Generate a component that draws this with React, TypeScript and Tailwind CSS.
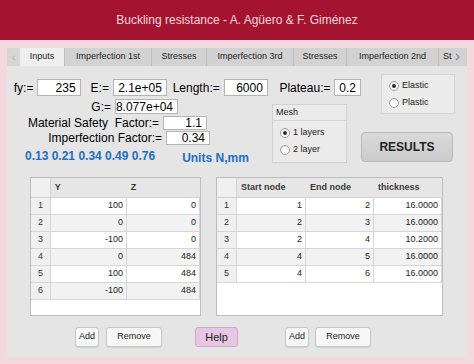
const tabs = [
  { label: 'Inputs', w: 'w-[45px]', active: true },
  { label: 'Imperfection 1st', w: 'w-[87px]' },
  { label: 'Stresses', w: 'w-[55px]' },
  { label: 'Imperfection 3rd', w: 'w-[87px]' },
  { label: 'Stresses', w: 'w-[53px]' },
  { label: 'Imperfection 2nd', w: 'w-[92px]' },
];

const nodes = [
  ['100', '0'],
  ['0', '0'],
  ['-100', '0'],
  ['0', '484'],
  ['100', '484'],
  ['-100', '484'],
];

const elements = [
  ['1', '2', '16.0000'],
  ['2', '3', '16.0000'],
  ['2', '4', '10.2000'],
  ['4', '5', '16.0000'],
  ['4', '6', '16.0000'],
];

function Radio({ checked, label }: { checked?: boolean; label: string }) {
  return (
    <div className="flex items-center gap-[3px] text-[9px] leading-[11px] text-[#222]">
      <span className="w-[10px] h-[10px] rounded-full border border-[#a0a0a0] bg-white flex items-center justify-center shadow-[inset_0_1px_1px_rgba(0,0,0,0.12)]">
        {checked && <span className="w-[4px] h-[4px] rounded-full bg-[#2a2a2a]" />}
      </span>
      <span>{label}</span>
    </div>
  );
}

function Field({ value, w, h = 'h-[17px]' }: { value: string; w: string; h?: string }) {
  return (
    <div
      className={`${w} ${h} ml-[4px] bg-white border border-[#b4b4b4] flex items-center justify-end pr-[4px] text-[12px] leading-[12px] text-black`}
    >
      {value}
    </div>
  );
}

function Label({ text, w }: { text: string; w: string }) {
  return (
    <span className={`${w} text-right text-[12px] leading-[14px] text-black whitespace-pre`}>{text}</span>
  );
}

function DataTable({
  headers,
  widths,
  rows,
  width,
}: {
  headers: string[];
  widths: string[];
  rows: string[][];
  width: string;
}) {
  return (
    <div className={`${width} h-[139px] bg-white border border-[#bdbdbd] flex flex-col text-[9px]`}>
      <div className="flex h-[20px] bg-[#e6e6e6] border-b border-[#d2d2d2]">
        <div className="w-[20px] bg-[#f0f0f0] border-r border-[#d2d2d2]" />
        {headers.map((h, i) => (
          <div
            key={i}
            className={`${widths[i]} flex items-center pl-[4px] font-bold text-[#3a3a3a] border-r border-[#e6e6e6]`}
          >
            {h}
          </div>
        ))}
      </div>
      {rows.map((r, ri) => (
        <div
          key={ri}
          className={`flex h-[17px] border-b border-[#d6d6d6] ${ri % 2 ? 'bg-[#f2f2f2]' : 'bg-white'}`}
        >
          <div className="w-[20px] bg-[#f0f0f0] border-r border-[#d6d6d6] flex items-center pl-[7px] text-[#333]">
            {ri + 1}
          </div>
          {r.map((c, ci) => (
            <div
              key={ci}
              className={`${widths[ci]} flex items-center justify-end pr-[3px] text-[#222] border-r border-[#d6d6d6]`}
            >
              {c}
            </div>
          ))}
        </div>
      ))}
    </div>
  );
}

function Btn({ label, w }: { label: string; w: string }) {
  return (
    <div
      className={`${w} h-[20px] rounded-[3px] bg-[#f7f7f7] border border-[#c6c6c6] shadow-[0_1px_1px_rgba(0,0,0,0.08)] flex items-center justify-center text-[9px] text-[#222]`}
    >
      {label}
    </div>
  );
}

export default function App() {
  return (
    <div
      className="w-[474px] h-[364px] bg-[#f4d9e0] overflow-hidden flex flex-col"
      style={{ fontFamily: '"Liberation Sans", Arial, sans-serif' }}
    >
      <div className="h-[40px] bg-[#a41430] flex items-center justify-center text-[12px] text-[#f6d6dd]">
        Buckling resistance - A. Agüero &amp; F. Giménez
      </div>

      <div className="ml-[7px] mt-[8px] w-[460px] flex flex-col">
        {/* tab strip */}
        <div className="flex h-[18px] text-[9px] text-[#222] whitespace-nowrap">
          <div className="w-[13px] shrink-0 bg-[#d6d6d6] flex items-center justify-center text-[#b0b0b0] text-[11px]">
            ‹
          </div>
          {tabs.map((t, i) => (
            <div
              key={i}
              className={`${t.w} shrink-0 flex items-center justify-center border-r border-[#bdbdbd] ${
                t.active ? 'bg-[#efefef]' : 'bg-[#d2d2d2]'
              }`}
            >
              {t.label}
            </div>
          ))}
          <div className="w-[28px] shrink-0 bg-[#d2d2d2] flex items-center pl-[4px] gap-[3px] overflow-hidden">
            <span>St</span>
            <svg width="5" height="8" viewBox="0 0 5 8" className="shrink-0">
              <path d="M1 1l3 3-3 3" fill="none" stroke="#8c8c8c" strokeWidth="1.2" />
            </svg>
          </div>
        </div>

        {/* panel */}
        <div className="h-[291px] bg-[#e5e5e5] flex flex-col">
          <div className="flex h-[111px]">
            <div className="w-[354px] flex flex-col">
              <div className="flex items-center mt-[13px] h-[17px]">
                <Label text="fy:=" w="w-[27px]" />
                <Field value="235" w="w-[44px]" />
                <Label text="E:=" w="w-[29px]" />
                <Field value="2.1e+05" w="w-[55px]" />
                <Label text="Length:=" w="w-[54px]" />
                <Field value="6000" w="w-[45px]" />
                <Label text="Plateau:=" w="w-[64px]" />
                <Field value="0.2" w="w-[27px]" />
              </div>
              <div className="flex">
                <div className="w-[265px] flex flex-col">
                  <div className="flex items-center mt-[3px] h-[15px]">
                    <Label text="G:=" w="w-[104px]" />
                    <Field value="8.077e+04" w="w-[63px]" h="h-[15px]" />
                  </div>
                  <div className="flex items-center mt-[2px] h-[14px]">
                    <Label text="Material Safety  Factor:=" w="w-[152px]" />
                    <Field value="1.1" w="w-[44px]" h="h-[14px]" />
                  </div>
                  <div className="flex items-center mt-[1px] h-[14px]">
                    <Label text="Imperfection Factor:=" w="w-[155px]" />
                    <Field value="0.34" w="w-[44px]" h="h-[14px]" />
                  </div>
                  <div className="flex items-start mt-[4px] text-[12px] leading-[14px] font-bold text-[#1f6fbe]">
                    <span className="ml-[18px]">0.13 0.21 0.34 0.49 0.76</span>
                    <span className="ml-[27px] mt-[2px]">Units N,mm</span>
                  </div>
                </div>
                <div className="w-[75px] h-[59px] mt-[8px] bg-[#ebebeb] border border-[#d2d2d2] flex flex-col">
                  <div className="h-[16px] border-b border-[#d6d6d6] flex items-center pl-[3px] text-[9px] text-[#222]">
                    Mesh
                  </div>
                  <div className="flex flex-col gap-[6px] pl-[7px] mt-[6px]">
                    <Radio checked label="1 layers" />
                    <Radio label="2 layer" />
                  </div>
                </div>
              </div>
            </div>

            <div className="flex flex-col">
              <div className="ml-[20px] mt-[8px] w-[74px] h-[40px] bg-[#ececec] border border-[#d6d6d6] flex flex-col justify-center gap-[6px] pl-[7px]">
                <Radio checked label="Elastic" />
                <Radio label="Plastic" />
              </div>
              <div className="mt-[18px] w-[92px] h-[30px] rounded-[4px] border border-[#b9b9b9] bg-gradient-to-b from-[#d9d9d9] to-[#cbcbcb] flex items-center justify-center text-[12px] font-bold text-[#222]">
                RESULTS
              </div>
            </div>
          </div>

          <div className="flex">
            <div className="ml-[23px]">
              <DataTable
                width="w-[171px]"
                headers={['Y', 'Z']}
                widths={['w-[77px]', 'w-[74px]']}
                rows={nodes}
              />
            </div>
            <div className="ml-[15px]">
              <DataTable
                width="w-[227px]"
                headers={['Start node', 'End node', 'thickness']}
                widths={['w-[69px]', 'w-[68px]', 'w-[68px]']}
                rows={elements}
              />
            </div>
          </div>

          <div className="flex items-center mt-[11px]">
            <div className="ml-[68px]">
              <Btn label="Add" w="w-[24px]" />
            </div>
            <div className="ml-[7px]">
              <Btn label="Remove" w="w-[56px]" />
            </div>
            <div className="ml-[33px] w-[43px] h-[20px] rounded-[3px] bg-[#e7c7e4] border border-[#cdaaca] flex items-center justify-center text-[11px] text-[#222]">
              Help
            </div>
            <div className="ml-[47px]">
              <Btn label="Add" w="w-[24px]" />
            </div>
            <div className="ml-[6px]">
              <Btn label="Remove" w="w-[56px]" />
            </div>
          </div>
        </div>
      </div>
    </div>
  );
}
